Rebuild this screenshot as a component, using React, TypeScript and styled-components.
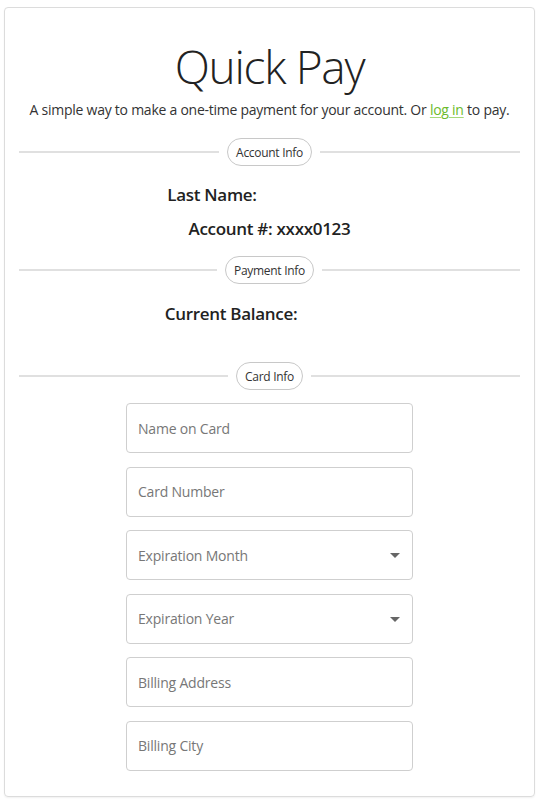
import React from "react";
import styled, { createGlobalStyle } from "styled-components";

const Global = createGlobalStyle`
  html, body { margin: 0; padding: 0; background: #fff; }
  body { font-family: "Open Sans", "Noto Sans", sans-serif; color: #222; }
  * { box-sizing: border-box; }
`;

const Page = styled.div`
  padding: 7px 5px 5px 4px;
`;

const Card = styled.div`
  border: 1px solid #dcdcdc;
  border-radius: 4px;
  box-shadow: 0 1px 2px rgba(0, 0, 0, 0.06);
  padding: 29px 14px 25px;
  display: flex;
  flex-direction: column;
  align-items: stretch;
`;

const Title = styled.h1`
  margin: 0;
  text-align: center;
  font-size: 46px;
  font-weight: 300;
  letter-spacing: -1.3px;
  line-height: 58px;
  color: #222;
`;

const Lead = styled.p`
  margin: 4px 0 0;
  text-align: center;
  font-size: 14px;
  letter-spacing: -0.25px;
  line-height: 22px;
  color: #333;
`;

const LoginLink = styled.a`
  color: #6cbb2c;
  text-decoration: underline;
  text-decoration-color: #a6d97a;
  text-underline-offset: 2px;
`;

const Divider = styled.div<{ $top: number }>`
  display: flex;
  align-items: center;
  gap: 8px;
  margin-top: ${(p) => p.$top}px;
  &::before,
  &::after {
    content: "";
    flex: 1;
    height: 2px;
    background: #e0e0e0;
  }
`;

const Pill = styled.span`
  border: 1px solid #c8c8c8;
  border-radius: 14px;
  height: 28px;
  padding: 0 8px;
  display: flex;
  align-items: center;
  font-size: 12px;
  letter-spacing: -0.3px;
  color: #333;
`;

const InfoRow = styled.div<{ $shift: number; $top: number }>`
  margin-top: ${(p) => p.$top}px;
  text-align: center;
  font-size: 17px;
  font-weight: 600;
  letter-spacing: -0.3px;
  line-height: 24px;
  color: #222;
  padding-right: ${(p) => p.$shift}px;
`;

const Fields = styled.div`
  margin-top: 13px;
  display: flex;
  flex-direction: column;
  align-items: center;
  gap: 13.5px;
`;

const FieldBox = styled.div`
  position: relative;
  width: 287px;
  height: 50px;
  border: 1px solid #cfcfcf;
  border-radius: 4px;
  display: flex;
  align-items: center;
  padding: 0 11px;
  font-size: 14px;
  letter-spacing: -0.2px;
  color: #777;
  background: #fff;
`;

const Caret = styled.span`
  position: absolute;
  right: 12px;
  top: 50%;
  margin-top: -2px;
  width: 0;
  height: 0;
  border-left: 5px solid transparent;
  border-right: 5px solid transparent;
  border-top: 5px solid #666;
`;

const fields: { label: string; select?: boolean }[] = [
  { label: "Name on Card" },
  { label: "Card Number" },
  { label: "Expiration Month", select: true },
  { label: "Expiration Year", select: true },
  { label: "Billing Address" },
  { label: "Billing City" },
];

export default function App() {
  return (
    <Page>
      <Global />
      <Card>
        <Title>Quick Pay</Title>
        <Lead>
          A simple way to make a one-time payment for your account. Or{" "}
          <LoginLink href="#">log in</LoginLink> to pay.
        </Lead>
        <Divider $top={17}>
          <Pill>Account Info</Pill>
        </Divider>
        <InfoRow $top={17} $shift={115}>Last Name:</InfoRow>
        <InfoRow $top={10} $shift={0}>Account #: xxxx0123</InfoRow>
        <Divider $top={15}>
          <Pill>Payment Info</Pill>
        </Divider>
        <InfoRow $top={18} $shift={77}>Current Balance:</InfoRow>
        <Divider $top={36}>
          <Pill>Card Info</Pill>
        </Divider>
        <Fields>
          {fields.map((f) => (
            <FieldBox key={f.label}>
              {f.label}
              {f.select && <Caret />}
            </FieldBox>
          ))}
        </Fields>
      </Card>
    </Page>
  );
}
